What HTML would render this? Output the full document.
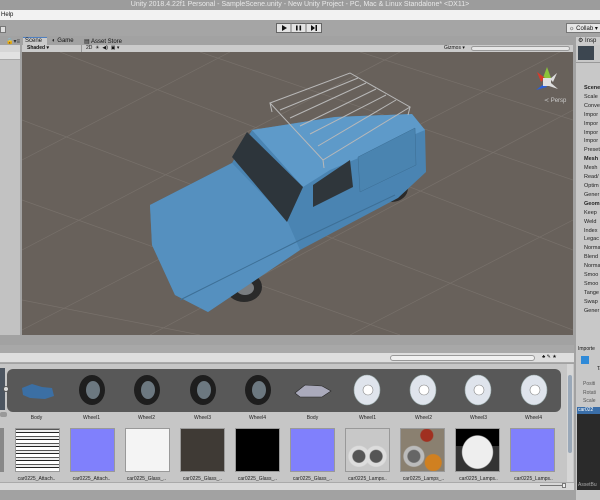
<!DOCTYPE html>
<html><head><style>
*{margin:0;padding:0;box-sizing:border-box}
body{width:600px;height:500px;overflow:hidden;background:#a2a2a2;font-family:"Liberation Sans",sans-serif;position:relative}
.a{position:absolute}
.t{font-size:6px;color:#111;white-space:nowrap}
.lbl{position:absolute;top:415px;width:55px;text-align:center;font-size:5px;color:#222}
.tx{position:absolute;top:428px;width:45px;height:44px;border:1px solid #999}
.tl{position:absolute;top:476px;width:55px;text-align:center;font-size:5px;color:#222}
</style></head><body>
<div class="a" style="left:0;top:0;width:600px;height:10px;background:#9c9c9c"></div>
<div class="a t" style="left:0;top:1px;width:600px;text-align:center;color:#e8e8e8;font-size:7px">Unity 2018.4.22f1 Personal - SampleScene.unity - New Unity Project - PC, Mac &amp; Linux Standalone* &lt;DX11&gt;</div>
<div class="a" style="left:0;top:10px;width:600px;height:10px;background:#f2f2f2"></div>
<div class="a t" style="left:1px;top:12px">Help</div>
<div class="a" style="left:0;top:20px;width:600px;height:16px;background:#a5a5a5"></div>
<div class="a" style="left:0;top:26px;width:6px;height:7px;background:#e0e0e0;border:1px solid #777"></div>
<div class="a" style="left:276px;top:23px;width:46px;height:10px;background:#e4e4e4;border:1px solid #666"></div>
<svg class="a" style="left:276px;top:23px" width="46" height="10"><path d="M6 2 L11 5 L6 8Z" fill="#111"/><line x1="15" y1="0" x2="15" y2="10" stroke="#777"/><rect x="20" y="2.5" width="1.6" height="5" fill="#111"/><rect x="23.5" y="2.5" width="1.6" height="5" fill="#111"/><line x1="30" y1="0" x2="30" y2="10" stroke="#777"/><path d="M35 2 L39 5 L35 8Z" fill="#111"/><rect x="39.5" y="2" width="1.5" height="6" fill="#111"/></svg>
<div class="a t" style="left:566px;top:23px;width:36px;height:10px;background:#e6e6e6;border:1px solid #777;padding:1px 2px">☼ Collab ▾</div>
<div class="a" style="left:0;top:36px;width:576px;height:9px;background:#a2a2a2"></div>
<div class="a t" style="left:23px;top:37px;width:24px;height:8px;background:#cbcbcb;border-top:1px solid #5080c0;padding-left:2px">Scene</div>
<div class="a t" style="left:52px;top:38px">◐ Game</div>
<div class="a t" style="left:84px;top:38px">▤ Asset Store</div>
<div class="a t" style="left:6px;top:38px;color:#333">🔒▾≡</div>
<div class="a" style="left:22px;top:45px;width:551px;height:7px;background:#cbcbcb"></div>
<div class="a t" style="left:25px;top:45px;width:57px;height:7px;font-size:5px;font-weight:bold;padding-left:2px;border-right:1px solid #999">Shaded ▾</div>
<div class="a t" style="left:86px;top:45px;font-size:5px">2D &nbsp;☀ &nbsp;◀) &nbsp;▣ ▾</div>
<div class="a t" style="left:444px;top:45px;font-size:5px">Gizmos ▾</div>
<div class="a" style="left:471px;top:46px;width:99px;height:5px;background:#e6e6e6;border:1px solid #999;border-radius:3px"></div>
<div class="a" style="left:0;top:45px;width:20px;height:7px;background:#d6d6d6"></div>
<div class="a" style="left:0;top:52px;width:20px;height:8px;background:#e2e2e2;border-bottom:1px solid #aaa"></div>
<div class="a" style="left:0;top:60px;width:20px;height:275px;background:#c2c2c2"></div>
<svg class="a" style="left:22px;top:52px" width="551" height="283" viewBox="22 52 551 283">
<rect x="22" y="52" width="551" height="283" fill="#68615b"/>
<g stroke="#78716b" stroke-width="0.7" fill="none">
<path d="M22 120 L573 330 M22 200 L400 335 M60 52 L573 250 M200 52 L573 180 M360 52 L573 120 M22 300 L200 335"/>
<path d="M22 250 L400 52 M22 330 L560 52 M150 335 L573 110 M350 335 L573 220 M22 160 L230 52"/>
</g>
<ellipse cx="392" cy="188" rx="16" ry="14" fill="#2a2a2a"/><ellipse cx="393" cy="188" rx="8" ry="7" fill="#7a7d80"/>
<ellipse cx="244" cy="287" rx="18" ry="15" fill="#2a2a2a"/><ellipse cx="245" cy="288" rx="9" ry="7" fill="#7a7d80"/>
<path d="M150 205 L232 163 L252 130 L335 117 L412 114 L425 130 L426 172 L398 198 L300 250 L208 312 L175 295 L152 245Z" fill="#4a84b2"/>
<path d="M150 205 L232 163 L287 220 L300 250 L208 312 L175 295 L152 245Z" fill="#5590bf"/>
<path d="M252 130 L335 117 L412 114 L425 130 L330 170 L303 187Z" fill="#5e9ac9"/>
<path d="M232 157 L247 132 L303 187 L287 222Z" fill="#2d353b"/>
<path d="M313 185 L350 160 L353 187 L313 207Z" fill="#2f363b"/>
<path d="M358 157 L415 128 L416 165 L360 192Z" fill="#4a84b0" stroke="#3c6d93" stroke-width="0.5"/>
<path d="M180 300 L300 240 L395 195" stroke="#3d6f96" fill="none"/>
<g stroke="#b8b8b8" stroke-width="1" fill="none">
<path d="M270 103 L350 73 L410 107 L323 160Z"/>
<path d="M280 110 L358 78 M290 118 L366 83 M300 126 L376 89 M310 134 L386 95 M318 146 L396 100"/>
<path d="M270 103 L272 112 M323 160 L324 168 M410 107 L408 115"/>
</g>
<path d="M547 67 L543 78 L551 78Z" fill="#8bc43a"/>
<path d="M537 72 L545 78 L541 82Z" fill="#d83a2a"/>
<path d="M536 90 L545 83 L547 87Z" fill="#2a5fd8"/>
<path d="M557 73 L550 79 L553 82Z" fill="#ddd"/>
<path d="M558 89 L551 83 L549 86Z" fill="#ddd"/>
<rect x="543" y="78" width="8" height="8" fill="#e0e0e0"/>
<text x="544" y="102" font-size="6" fill="#ccc" font-family="Liberation Sans">≺ Persp</text>
</svg>
<div class="a" style="left:573px;top:36px;width:3px;height:309px;background:#a2a2a2"></div>
<div class="a t" style="left:576px;top:37px;width:24px;height:8px;background:#cbcbcb;padding-left:2px">⚙ Insp</div>
<div class="a" style="left:576px;top:45px;width:24px;height:300px;background:#c8c8c8"></div>
<div class="a" style="left:578px;top:46px;width:16px;height:14px;background:#3c4650"></div>
<div class="a" style="left:576px;top:62px;width:24px;height:1px;background:#999"></div>
<div class="a t" style="left:584px;top:84px;font-size:5.5px;line-height:8.9px;color:#222">
<b>Scene</b><br>Scale<br>Conve<br>Impor<br>Impor<br>Impor<br>Impor<br>Preset<br><b>Mesh</b><br>Mesh<br>Read/<br>Optim<br>Gener<br><b>Geom</b><br>Keep<br>Weld<br>Index<br>Legac<br>Norma<br>Blend<br>Norma<br>Smoo<br>Smoo<br>Tange<br>Swap<br>Gener</div>
<div class="a" style="left:0;top:335px;width:576px;height:10px;background:#a2a2a2"></div>
<div class="a" style="left:0;top:345px;width:576px;height:8px;background:#a8a8a8"></div>
<div class="a" style="left:0;top:353px;width:574px;height:10px;background:#dedede;border-bottom:1px solid #aaa"></div>
<div class="a" style="left:390px;top:355px;width:145px;height:6px;background:#f0f0f0;border:1px solid #999;border-radius:3px"></div>
<div class="a t" style="left:542px;top:354px;font-size:5px">♣ ✎ ★</div>
<div class="a" style="left:0;top:364px;width:574px;height:118px;background:#c6c6c6"></div>
<div class="a" style="left:0;top:368px;width:5px;height:42px;background:#4c5560"></div>
<div class="a" style="left:0;top:412px;width:7px;height:5px;background:#999;border-radius:2px"></div>
<div class="a" style="left:7px;top:369px;width:554px;height:43px;background:#585858;border-radius:6px"></div>
<div class="a" style="left:3px;top:386px;width:6px;height:6px;background:#ddd;border-radius:50%;border:1px solid #555"></div>
<svg class="a" style="left:0;top:369px" width="570" height="43">
<path d="M22 19 L32 15 L42 18 L52 19 L54 27 L45 30 L30 29 L23 26Z" fill="#3b6fa4"/>
<g fill="#1e1e1e"><ellipse cx="92" cy="21" rx="13" ry="15"/><ellipse cx="147" cy="21" rx="13" ry="15"/><ellipse cx="203" cy="21" rx="13" ry="15"/><ellipse cx="258" cy="21" rx="13" ry="15"/></g>
<g fill="#6c7880"><ellipse cx="93" cy="21" rx="7" ry="9"/><ellipse cx="148" cy="21" rx="7" ry="9"/><ellipse cx="204" cy="21" rx="7" ry="9"/><ellipse cx="259" cy="21" rx="7" ry="9"/></g>
<path d="M295 24 L305 16 L322 17 L331 22 L322 28 L300 28Z" fill="#aab" stroke="#222" stroke-width="0.6"/>
<g fill="#dfe4ec" stroke="#9aa" stroke-width="0.6"><ellipse cx="367" cy="21" rx="13" ry="15"/><ellipse cx="423" cy="21" rx="13" ry="15"/><ellipse cx="478" cy="21" rx="13" ry="15"/><ellipse cx="534" cy="21" rx="13" ry="15"/></g>
<g fill="#fff" stroke="#888" stroke-width="0.6"><circle cx="368" cy="21" r="5"/><circle cx="424" cy="21" r="5"/><circle cx="479" cy="21" r="5"/><circle cx="535" cy="21" r="5"/></g>
</svg>
<div class="lbl" style="left:9px">Body</div><div class="lbl" style="left:64px">Wheel1</div><div class="lbl" style="left:119px">Wheel2</div><div class="lbl" style="left:175px">Wheel3</div><div class="lbl" style="left:230px">Wheel4</div><div class="lbl" style="left:285px">Body</div><div class="lbl" style="left:340px">Wheel1</div><div class="lbl" style="left:396px">Wheel2</div><div class="lbl" style="left:451px">Wheel3</div><div class="lbl" style="left:506px">Wheel4</div>
<div class="a" style="left:0;top:428px;width:4px;height:44px;background:#888"></div>
<div class="tx" style="left:15px;background:repeating-linear-gradient(0deg,#fff 0 3px,#222 3px 4px,#eee 4px 6px,#555 6px 7px)"></div>
<div class="tx" style="left:70px;background:#8080fc"></div>
<div class="tx" style="left:125px;background:#f4f4f4"></div>
<div class="tx" style="left:180px;background:#3f3a35"></div>
<div class="tx" style="left:235px;background:#000"></div>
<div class="tx" style="left:290px;background:#8080fc"></div>
<div class="tx" style="left:345px;background:radial-gradient(circle at 30% 65%,#555 0 6px,#ddd 7px 10px,transparent 11px),radial-gradient(circle at 70% 65%,#555 0 6px,#ddd 7px 10px,transparent 11px),#c8c8c8"></div>
<div class="tx" style="left:400px;background:radial-gradient(circle at 30% 65%,#666 0 6px,#bbb 7px 10px,transparent 11px),radial-gradient(circle at 75% 80%,#d08020 0 8px,transparent 9px),radial-gradient(circle at 60% 15%,#a03020 0 6px,transparent 7px),#8a8070"></div>
<div class="tx" style="left:455px;background:radial-gradient(ellipse at 50% 55%,#eee 0 15px,transparent 16px),linear-gradient(#000 0 40%,#333 40%)"></div>
<div class="tx" style="left:510px;background:#8080fc"></div>
<div class="tl" style="left:9px">car0225_Attach..</div><div class="tl" style="left:64px">car0225_Attach..</div><div class="tl" style="left:119px">car0225_Glass_..</div><div class="tl" style="left:175px">car0225_Glass_..</div><div class="tl" style="left:230px">car0225_Glass_..</div><div class="tl" style="left:285px">car0225_Glass_..</div><div class="tl" style="left:340px">car0225_Lamps..</div><div class="tl" style="left:396px">car0225_Lamps_..</div><div class="tl" style="left:451px">car0225_Lamps..</div><div class="tl" style="left:506px">car0225_Lamps..</div>
<div class="a" style="left:567px;top:364px;width:6px;height:118px;background:#d6d6d6"></div>
<div class="a" style="left:568px;top:375px;width:4px;height:78px;background:#9aa8b8;border-radius:2px"></div>
<div class="a" style="left:0;top:482px;width:574px;height:8px;background:#d8d8d8;border-top:1px solid #aaa"></div>
<div class="a" style="left:540px;top:485px;width:25px;height:1px;background:#777"></div>
<div class="a" style="left:562px;top:483px;width:4px;height:5px;background:#eee;border:1px solid #777"></div>
<div class="a" style="left:0;top:490px;width:576px;height:10px;background:#a2a2a2"></div>
<div class="a" style="left:574px;top:345px;width:2px;height:155px;background:#a2a2a2"></div>
<div class="a" style="left:576px;top:345px;width:24px;height:155px;background:#c8c8c8"></div>
<div class="a t" style="left:578px;top:346px;font-size:5px">Importe</div>
<div class="a" style="left:581px;top:356px;width:8px;height:8px;background:#2f8ad8"></div>
<div class="a t" style="left:597px;top:366px;font-size:5px">Ta</div>
<div class="a t" style="left:583px;top:380px;font-size:5px;line-height:8.5px;color:#555">Positi<br>Rotati<br>Scale</div>
<div class="a t" style="left:577px;top:407px;width:23px;height:7px;background:#3a6ea8;color:#fff;font-size:5px;padding-left:1px">car022</div>
<div class="a" style="left:577px;top:414px;width:23px;height:76px;background:#2a2a2a"></div>
<div class="a t" style="left:578px;top:482px;color:#aaa;font-size:5px">AssetBu</div>
</body></html>
